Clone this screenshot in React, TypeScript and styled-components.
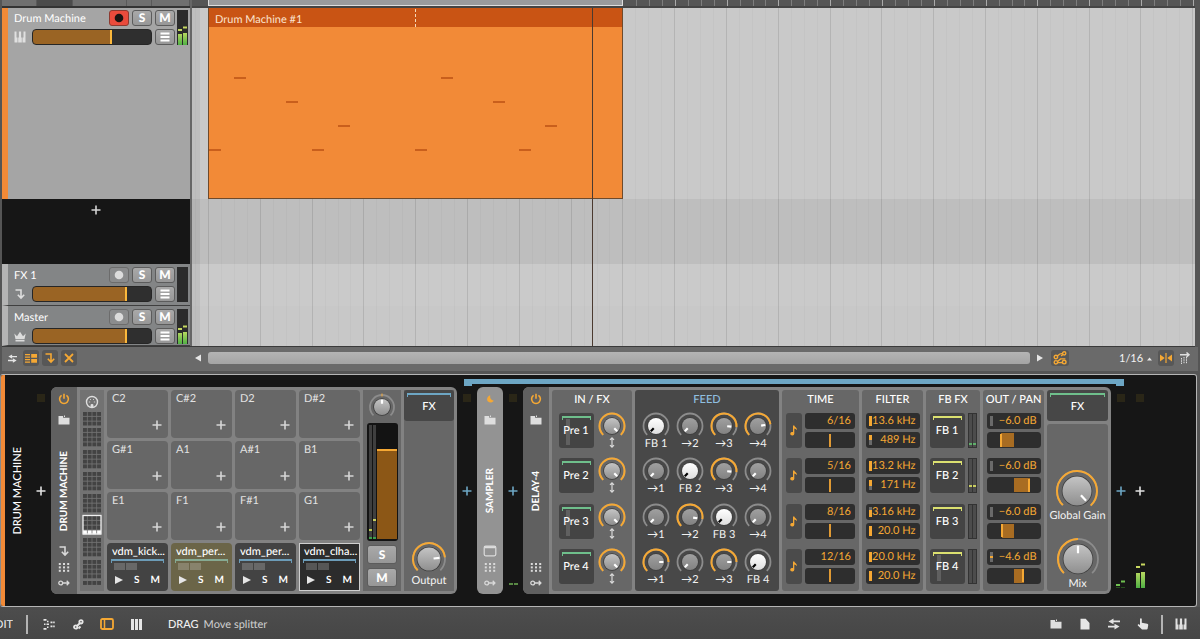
import React from "react";
import styled, { createGlobalStyle, css } from "styled-components";

const C = {
  orange: "#f28a37",
  amber: "#f5a834",
  brown: "#9a6424",
  panel: "#676767",
  frame: "#828282",
  dark: "#161616",
  well: "#2e2e2e",
  blue: "#6da6c4",
  green: "#6fbf8c",
  yellow: "#dbe070",
};

const Global = createGlobalStyle`
  * { box-sizing: border-box; }
  body { margin: 0; background: #555; font-family: Lato, "Open Sans", sans-serif; font-size: 11px; line-height: 14px; color: #f2f2f2; overflow: hidden; text-rendering: geometricPrecision; }
  button, input, select { font: inherit; color: inherit; margin: 0; padding: 0; border: 0; background: none; text-rendering: inherit; }
  svg { display: block; }
`;

/* ---------- shared controls ---------- */

const IconButton = styled.button<{ $active?: boolean; $w?: number }>`
  width: ${(p) => p.$w ?? 16}px;
  height: 16px;
  display: grid;
  place-items: center;
  flex: none;
  border-radius: 3px;
  color: ${(p) => (p.$active ? C.amber : "#e0e0e0")};
  background: ${(p) => (p.$active ? "#575757" : "transparent")};
`;

const KeyButton = styled.button<{ $kind?: "rec" | "dim"; $tall?: boolean }>`
  width: ${(p) => (p.$tall ? 30 : 20)}px;
  height: ${(p) => (p.$tall ? 19 : 16)}px;
  flex: none;
  display: grid;
  place-items: center;
  font-weight: 900;
  font-size: 12px;
  line-height: 12px;
  color: #fff;
  border: 1px solid #5c5c5c;
  border-radius: 3px;
  background: linear-gradient(#a9a9a9, #979797);
  ${(p) => p.$kind === "rec" && css`background: #ea4b3c; border-color: #8c3a30;`}
  ${(p) => p.$kind === "dim" && css`background: #8b8c8d; border-color: #6c6c6c;`}
`;

const Fader = styled.input<{ $pct: number }>`
  appearance: none;
  width: 120px;
  height: 16px;
  border: 1px solid #262626;
  border-radius: 4px;
  background: linear-gradient(to right, ${C.brown} ${(p) => p.$pct}%, #2f2f2f ${(p) => p.$pct}%);
  &::-webkit-slider-thumb { appearance: none; width: 2px; height: 14px; background: #fbb83c; }
`;

const PanSlider = styled.input<{ $from: number; $to: number; $at: number }>`
  appearance: none;
  width: 54px;
  height: 16px;
  border: 1px solid ${C.well};
  border-radius: 3px;
  background: linear-gradient(to right, ${C.well} ${(p) => p.$from}%, #a86c22 ${(p) => p.$from}%, #a86c22 ${(p) => p.$to}%, ${C.well} ${(p) => p.$to}%);
  &::-webkit-slider-thumb { appearance: none; width: 2px; height: 13px; background: ${C.amber}; }
`;

const OffsetSlider = styled.input`
  appearance: none;
  width: 50px;
  height: 16px;
  border-radius: 3px;
  background: ${C.well};
  &::-webkit-slider-thumb { appearance: none; width: 2px; height: 13px; background: #e09a34; }
`;

const Bracket = styled.span<{ $c: string }>`
  display: block;
  height: 4px;
  border: 1px solid ${(p) => p.$c};
  border-top-width: 2px;
  border-bottom: 0;
`;

const KnobBox = styled.span`
  position: relative;
  display: block;
  flex: none;
  & > svg { overflow: visible; }
`;
const KnobInput = styled.input`
  position: absolute;
  inset: 0;
  width: 100%;
  height: 100%;
  opacity: 0;
`;

function point(c: number, r: number, deg: number) {
  const a = ((deg - 90) * Math.PI) / 180;
  return [c + r * Math.cos(a), c + r * Math.sin(a)];
}
function arc(c: number, r: number, from: number, to: number) {
  const [x1, y1] = point(c, r, from);
  const [x2, y2] = point(c, r, to);
  return `M${x1} ${y1}A${r} ${r} 0 ${to - from > 180 ? 1 : 0} 1 ${x2} ${y2}`;
}

type KnobProps = { name: string; size: number; h: number; ring: number; disc: number; angle: number; lit?: boolean; tone?: "white" | "grey" | "light"; zero?: boolean };
function Knob({ name, size, h, ring, disc, angle, lit, tone = "light", zero }: KnobProps) {
  const c = size / 2;
  const [x1, y1] = point(c, disc * 0.4, angle);
  const [x2, y2] = point(c, disc * 0.92, angle);
  const id = `k-${tone}`;
  return (
    <KnobBox>
      <svg width={size} height={h} viewBox={`0 0 ${size} ${h}`}>
        <defs>
          <linearGradient id={id} x1="0" y1="0" x2="0" y2="1">
            <stop offset="0" stopColor={tone === "white" ? "#ffffff" : tone === "grey" ? "#a0a0a0" : "#c4c4c4"} />
            <stop offset="1" stopColor={tone === "white" ? "#dedede" : tone === "grey" ? "#828282" : "#8f8f8f"} />
          </linearGradient>
        </defs>
        <path d={arc(c, ring, -135, 135)} fill="none" stroke="#8c8c8c" strokeWidth="1.8" />
        {lit && <path d={arc(c, ring, -135, angle)} fill="none" stroke={C.amber} strokeWidth="2" />}
        {zero && <path d={`M${c} ${c - ring - 1.5}v3`} stroke={C.amber} strokeWidth="1" />}
        <circle cx={c} cy={c} r={disc + 0.8} fill="#3c3c3c" />
        <circle cx={c} cy={c} r={disc} fill={`url(#${id})`} />
        <path d={`M${x1} ${y1}L${x2} ${y2}`} stroke={tone === "white" ? "#000" : "#fff"} strokeWidth="2.2" />
      </svg>
      <KnobInput type="range" min={-135} max={135} defaultValue={angle} aria-label={name} />
    </KnobBox>
  );
}

/* ---------- icons ---------- */

const Power = () => (
  <svg width="12" height="12" viewBox="0 0 12 12" fill="none" stroke={C.amber} strokeWidth="1.6">
    <path d="M3.6 2.4a4.4 4.4 0 1 0 4.8 0M6 .8v5" />
  </svg>
);
const Moon = () => (
  <svg width="12" height="12" viewBox="0 0 12 12">
    <path d="M6.2 2.2c-.5 2.8.6 4.6 3.6 5.6-1.4 2-4 2.4-5.8.8C2.4 7 3 3.2 6.2 2.2z" fill={C.amber} />
  </svg>
);
const Folder = () => (
  <svg width="12" height="10" viewBox="0 0 12 10" fill="#dedede">
    <path d="M.5 9.500V1h4.600v1.800h6.400v6.700zM6 .6h1v1.400H6z" />
  </svg>
);
const Plus = ({ color = "#e2e2e2" }: { color?: string }) => (
  <svg width="10" height="10" viewBox="0 0 10 10">
    <path d="M5 .5v9M.5 5h9" stroke={color} strokeWidth="1.6" />
  </svg>
);
const Turn = ({ color = "#d8d8d8" }: { color?: string }) => (
  <svg width="12" height="12" viewBox="0 0 12 12" fill="none" stroke={color} strokeWidth="1.6">
    <path d="M1.500 2h5.500v8M3.800 6.800L7 10l3.200-3.200" />
  </svg>
);
const Dots = () => (
  <svg width="12" height="9" viewBox="0 0 12 9" fill="#dadada">
    {[0, 3.4, 6.8].map((y) => [0.8, 5, 9.2].map((x) => <rect key={x + y * 20} x={x} y={y} width="2" height="2" />))}
  </svg>
);
const Link = () => (
  <svg width="12" height="8" viewBox="0 0 12 8" fill="none" stroke="#d8d8d8" strokeWidth="1.300">
    <circle cx="2.700" cy="4" r="1.900" />
    <path d="M4.600 4h6.200M8.700 1.800L10.900 4 8.700 6.200" />
  </svg>
);
const WindowIcon = () => (
  <svg width="14" height="12" viewBox="0 0 14 12">
    <rect x="1.200" y="1.200" width="11.600" height="9.600" rx="1.500" fill="none" stroke="#dcdcdc" strokeWidth="1.200" />
    <path d="M1.500 2.300h11" stroke="#dcdcdc" strokeWidth="2" />
  </svg>
);
const Piano = () => (
  <svg width="12" height="12" viewBox="0 0 12 12" fill="#e0e0e0">
    <path d="M.5.500h2v6h1v5h-3zM4.200 6.500h.7v-6h2.200v6h.7v5H4.200zM8.500 6.500h1v-6h2v11h-3z" />
  </svg>
);
const Crown = () => (
  <svg width="12" height="11" viewBox="0 0 12 11" fill="#dcdcdc">
    <path d="M.3 2.500l2.700 2.700L6 .8l3 4.400 2.700-2.700-1.200 5.800h-9zM1.500 9h9v1.500h-9z" />
  </svg>
);
const Lines = () => (
  <svg width="10" height="10" viewBox="0 0 10 10" stroke="#fff" strokeWidth="1.800">
    <path d="M.5 1.500h9M.5 5h9M.5 8.500h9" />
  </svg>
);
const Dot = ({ color }: { color: string }) => (
  <svg width="10" height="10" viewBox="0 0 10 10">
    <circle cx="5" cy="5" r="4.300" fill={color} />
  </svg>
);
const Swap = ({ s = 10 }: { s?: number }) => (
  <svg width={s} height={s} viewBox="0 0 12 12" fill="#e4e4e4">
    <path d="M5.500 2.500H12v1.800H5.500v2L.500 3.400l5-2.900zM6.500 7.700H0v1.800h6.500v2l5-2.900-5-2.900z" />
  </svg>
);
const Note = () => (
  <svg width="8" height="11" viewBox="0 0 8 11" fill={C.amber}>
    <path d="M3 .5h1.300c.2 1.500 3 2 2.600 4.700C6.200 4 5.200 3.600 4.300 3.500V8.600a2 1.700 0 1 1-1.300-1.500z" />
  </svg>
);
const UpDown = () => (
  <svg width="8" height="12" viewBox="0 0 8 12" fill="none" stroke="#dadada" strokeWidth="1.300">
    <path d="M4 1v10M1.800 3.200L4 1l2.200 2.200M1.800 8.800L4 11l2.200-2.200" />
  </svg>
);
const Triangle = ({ d }: { d: string }) => (
  <svg width="8" height="8" viewBox="0 0 8 8" fill="#e6e6e6">
    <path d={d} />
  </svg>
);

/* ---------- arranger ---------- */

const Page = styled.div`
  min-height: 100vh;
  display: flex;
  flex-direction: column;
  background: #555;
`;
const Arranger = styled.section`
  flex: 1;
  display: grid;
  grid-template-columns: 188px 1fr;
  column-gap: 2px;
  grid-template-rows: 6px 1fr 65px 42px 40px;
  margin: 0 5px 0 2px;
  background: #666;
  border-bottom: 1px solid #3a3a3a;
`;
const Overview = styled.div`
  display: grid;
  grid-template-columns: 35px 36px 54px 25px 1fr;
  background: #6d6d6d;
`;
const OverviewCell = styled.span<{ $on?: boolean }>`
  background: ${(p) => (p.$on ? "#4b4b4b" : "#6f6f6f")};
  border-right: 1px solid #595959;
`;
const Ruler = styled.div`
  display: flex;
  background: #555;
  padding-left: 16px;
`;
const LoopRegion = styled.div`
  width: 415px;
  flex: none;
  background: #9a9b9d;
  border: solid #dedede;
  border-width: 0 1px 1px;
`;
const RulerTicks = styled.div`
  flex: 1;
  overflow: hidden;
`;
const TrackColumn = styled.div`
  grid-row: 2 / 6;
  display: grid;
  grid-template-rows: subgrid;
  grid-template-columns: minmax(0, 1fr);
  border-top: 2px solid #333;
`;
const TrackHead = styled.div<{ $main?: boolean }>`
  display: flex;
  align-items: flex-start;
  background: ${(p) => (p.$main ? "#a5a5a5" : "#838586")};
  border-left: 6px solid ${(p) => (p.$main ? C.orange : "#b4b4b4")};
  border-bottom: ${(p) => (p.$main ? 0 : 1)}px solid #3f3f3f;
  padding: ${(p) => (p.$main ? 2 : 3)}px 2px 0 6px;
  gap: 2px;
`;
const TrackGrid = styled.div`
  display: grid;
  grid-template-columns: 18px 71px 20px 20px 20px;
  column-gap: 3px;
  row-gap: 3px;
  align-items: center;
  flex: 1;
`;
const TrackName = styled.span`
  grid-column: 1 / 3;
  padding-top: 2px;
  color: #fff;
`;
const FaderCell = styled.div`
  grid-column: 2 / 5;
  display: flex;
  justify-content: flex-end;
`;
const AddTrack = styled.button`
  background: #161616;
  display: flex;
  justify-content: center;
  padding-top: 6px;
`;
const Timeline = styled.div`
  grid-row: 2 / 6;
  grid-column: 2;
  position: relative;
  display: grid;
  grid-template-rows: subgrid;
  border-top: 2px solid #444;
`;
const Lane = styled.div<{ $tone: string }>`
  background: ${(p) => p.$tone};
  padding-left: 16px;
  display: flex;
`;
const Overlay = styled.svg`
  position: absolute;
  inset: 0;
  width: 100%;
  height: 100%;
`;
const Clip = styled.div`
  position: relative;
  z-index: 1;
  width: 415px;
  background: ${C.orange};
  border: 1px solid #6e4a2c;
  border-top: 0;
  display: flex;
  flex-direction: column;
`;
const ClipTitle = styled.div`
  height: 19px;
  padding: 5px 0 0 6px;
  background: #c95414;
  color: #fbe3cf;
`;
const NoteCanvas = styled.svg`
  flex: 1;
  width: 100%;
`;
const Playhead = styled.div`
  position: absolute;
  z-index: 2;
  left: 400px;
  top: 0;
  bottom: 0;
  width: 1px;
  background: #4b3a30;
`;

const BEAT = 51.8;
const notes = [[0, 3], [1, 0], [3, 1], [4, 3], [5, 2], [8, 3], [9, 0], [11, 1], [12, 3], [13, 2]];

function GridLines() {
  return (
    <Overlay aria-hidden="true">
      {Array.from({ length: 120 }, (_, i) => (
        <rect key={i} x={Math.round(16 + (i - 1) * (BEAT / 4))} y="0" width="1" height="100%" fill="#000" opacity={(i - 1) % 4 === 0 ? 0.1 : 0.025} />
      ))}
      <rect x="0" y="0" width="8" height="100%" fill="#000" opacity="0.05" />
    </Overlay>
  );
}

const MeterBox = styled.div<{ $h: number }>`
  width: 11px;
  height: ${(p) => p.$h}px;
  background: #2b2b2b;
  display: flex;
  align-items: flex-end;
  justify-content: center;
`;
function LevelMeter({ on, h = 35 }: { on?: boolean; h?: number }) {
  return (
    <MeterBox $h={h}>
      {on && (
        <svg width="9" height="20" viewBox="0 0 9 20">
          <defs>
            <linearGradient id="lvl" x1="0" y1="0" x2="0" y2="1">
              <stop offset="0" stopColor="#b8d860" />
              <stop offset="1" stopColor="#4fb044" />
            </linearGradient>
          </defs>
          <path d="M0 9h4v11H0zM5 8h4v12H5z" fill="url(#lvl)" />
          <path d="M0 4h4v2H0zM5 1.500h4v2H5z" fill="#c5d860" />
        </svg>
      )}
    </MeterBox>
  );
}

function Track({ name, main, level, pct, icon }: { name: string; main?: boolean; level?: boolean; pct: number; icon: React.ReactNode }) {
  return (
    <TrackHead $main={main}>
      <TrackGrid>
        <TrackName>{name}</TrackName>
        <KeyButton $kind={main ? "rec" : "dim"} aria-label={`Arm ${name}`}><Dot color={main ? "#1c1412" : "#dcdcdc"} /></KeyButton>
        <KeyButton>S</KeyButton>
        <KeyButton>M</KeyButton>
        {icon}
        <FaderCell><Fader type="range" min={0} max={100} defaultValue={pct} $pct={pct} aria-label={`${name} volume`} /></FaderCell>
        <KeyButton aria-label={`${name} menu`}><Lines /></KeyButton>
      </TrackGrid>
      <LevelMeter on={level} />
    </TrackHead>
  );
}

const ToolStrip = styled.div`
  height: 24px;
  display: flex;
  align-items: center;
  gap: 3px;
  padding: 0 5px 2px 2px;
  background: #6a6a6a;
  margin: 0 2px;
`;
const StripLeft = styled.div`
  width: 187px;
  display: flex;
  gap: 3px;
`;
const Scroll = styled.div`
  flex: 1;
  display: flex;
  align-items: center;
  gap: 6px;
  padding-right: 4px;
`;
const ScrollThumb = styled.div`
  flex: 1;
  height: 12px;
  border-radius: 3px;
  background: linear-gradient(#b4b4b4, #a4a4a4);
`;
const StripRight = styled.div`
  width: 142px;
  display: flex;
  align-items: center;
  gap: 3px;
`;
const Snap = styled.label`
  flex: 1;
  display: flex;
  align-items: center;
  justify-content: flex-end;
  gap: 3px;
  padding: 2px 3px 0 0;
`;
const SnapSelect = styled.select`
  appearance: none;
`;

/* ---------- device panel ---------- */

const DevicePanel = styled.section`
  height: 233px;
  margin: 3px 3px 0 0;
  display: flex;
  background: ${C.dark};
  border: 1px solid #b5b5b5;
  border-left-color: #8a8a8a;
  border-radius: 3px;
  overflow: hidden;
`;
const Stripe = styled.span`
  width: 4px;
  background: ${C.orange};
`;
const VLabel = styled.span<{ $big?: boolean }>`
  writing-mode: vertical-rl;
  transform: rotate(180deg);
  font-size: ${(p) => (p.$big ? 11 : 10)}px;
  font-weight: ${(p) => (p.$big ? 500 : 700)};
  white-space: nowrap;
  color: #fff;
`;
const ChainName = styled.div`
  width: 26px;
  display: grid;
  place-items: center;
`;
const SlotBox = styled.div<{ $w: number }>`
  width: ${(p) => p.$w}px;
  flex: none;
  height: 207px;
  display: grid;
  grid-template-rows: 1fr 14px 1fr;
  justify-items: center;
  align-items: center;
  padding: 6px 0;
`;
const SlotLed = styled.span`
  width: 8px;
  height: 8px;
  margin-top: 1px;
  background: #2a2617;
  align-self: start;
`;
const SlotFoot = styled.span`
  align-self: end;
`;
const SlotButton = styled.button`
  display: grid;
  place-items: center;
`;
function Slot({ w, color, foot }: { w: number; color?: string; foot?: React.ReactNode }) {
  return (
    <SlotBox $w={w}>
      <SlotLed />
      <SlotButton aria-label="Add device"><Plus color={color} /></SlotButton>
      <SlotFoot>{foot}</SlotFoot>
    </SlotBox>
  );
}
const Lead = styled.div`
  display: flex;
  padding-top: 12px;
`;
const Nested = styled.div`
  padding-top: 4px;
`;
const ChainBar = styled.div`
  height: 7px;
  margin: 0 6px 1px 7px;
  border: 8px solid ${C.blue};
  border-width: 0 8px;
  background: linear-gradient(${C.blue} 5px, ${C.dark} 5px);
`;
const Row = styled.div`
  display: flex;
`;
const DeviceBox = styled.article<{ $tone?: string }>`
  height: 207px;
  display: flex;
  gap: 3px;
  padding-right: ${(p) => (p.$tone ? 0 : 3)}px;
  background: ${(p) => p.$tone ?? C.frame};
  border-radius: 6px;
  overflow: hidden;
`;
const DeviceSide = styled.header<{ $clear?: boolean }>`
  width: 26px;
  display: grid;
  grid-template-rows: 1fr auto 1fr;
  justify-items: center;
  padding: 4px 0 3px;
  background: ${(p) => (p.$clear ? "transparent" : "#606060")};
`;
const SideGroup = styled.div<{ $end?: boolean }>`
  display: flex;
  flex-direction: column;
  align-items: center;
  justify-content: ${(p) => (p.$end ? "flex-end" : "flex-start")};
  gap: ${(p) => (p.$end ? 0 : 5)}px;
`;
function Side({ name, top, extra, clear }: { name: string; top: React.ReactNode; extra?: React.ReactNode; clear?: boolean }) {
  return (
    <DeviceSide $clear={clear}>
      <SideGroup>
        <IconButton aria-label="Enable">{top}</IconButton>
        <IconButton aria-label="Presets"><Folder /></IconButton>
      </SideGroup>
      <VLabel>{name}</VLabel>
      <SideGroup $end>
        {extra && <IconButton aria-label="Chain">{extra}</IconButton>}
        <IconButton aria-label="Remote controls"><Dots /></IconButton>
        <IconButton aria-label="Modulators"><Link /></IconButton>
      </SideGroup>
    </DeviceSide>
  );
}

const Minimap = styled.div`
  width: 24px;
  margin: 3px 0;
  background: #727272;
  display: flex;
  justify-content: center;
`;
const PadGrid = styled.div`
  display: grid;
  grid-template-columns: repeat(4, 61px);
  grid-auto-rows: 48px;
  gap: 3px;
  margin: 3px 0;
`;
const Pad = styled.button`
  display: flex;
  justify-content: space-between;
  padding: 2px 6px 8px 5px;
  background: ${C.panel};
  border-radius: 4px;
  color: #e2e2e2;
  text-align: left;
  & > svg { align-self: flex-end; }
`;
const FullPad = styled.div<{ $mode?: string }>`
  display: flex;
  flex-direction: column;
  background: ${(p) => (p.$mode === "hit" ? "#6b6548" : p.$mode === "sel" ? "#2c2c2c" : "#434343")};
  outline: ${(p) => (p.$mode === "sel" ? "1px solid #cfcfcf" : "none")};
  outline-offset: -1px;
  border-radius: ${(p) => (p.$mode === "sel" ? 0 : 4)}px;
  padding: 2px 4px;
`;
const PadName = styled.span`
  padding-left: 1px;
  white-space: nowrap;
  color: #fff;
  font-weight: 500;
`;
const Chips = styled.span`
  display: flex;
  gap: 1px;
  padding-left: 3px;
`;
const Chip = styled.span`
  width: 11px;
  height: 7px;
  background: rgba(255, 255, 255, 0.2);
`;
const PadKeys = styled.span`
  display: flex;
  justify-content: space-between;
  align-items: center;
  padding: 5px 4px 0;
  font-size: 10px;
`;
const PadKey = styled.button`
  color: #fff;
  font-weight: 700;
  line-height: 10px;
`;

const Strip = styled.div<{ $w: number; $bare?: boolean }>`
  width: ${(p) => p.$w}px;
  margin: 3px 0;
  display: flex;
  flex-direction: column;
  align-items: center;
  justify-content: space-between;
  background: ${(p) => (p.$bare ? "transparent" : C.panel)};
`;
const Mixer = styled(Strip)`
  padding: 3px 0 4px;
  gap: 4px;
`;
const VolumeWell = styled.div`
  display: grid;
  grid-template-columns: 3px 3px 20px;
  grid-template-rows: minmax(0, 1fr);
  gap: 1px;
  flex: 1;
  min-height: 0;
  width: 31px;
  background: #131313;
  border: 2px solid #131313;
  border-right-width: 1px;
  border-radius: 3px;
`;
const ThinMeter = styled.span<{ $y: string; $at: number }>`
  background:
    linear-gradient(${(p) => p.$y}, ${(p) => p.$y}) 0 ${(p) => p.$at}% / 100% 2px no-repeat,
    linear-gradient(#3ea04c, #3ea04c) 0 100% / 100% 2px no-repeat,
    #3f3f3f;
`;
const VFader = styled.input`
  appearance: none;
  writing-mode: vertical-lr;
  direction: rtl;
  width: 20px;
  height: 100%;
  min-height: 0;
  background: linear-gradient(to top, #8c5716 79%, #131313 79%);
  &::-webkit-slider-thumb { appearance: none; width: 20px; height: 2px; background: ${C.amber}; }
`;
const FxButton = styled.button<{ $w: number }>`
  width: ${(p) => p.$w}px;
  height: 31px;
  padding: 3px;
  background: #474747;
  border-radius: 3px;
  display: flex;
  flex-direction: column;
  align-items: center;
  gap: 3px;
  color: #fff;
  font-weight: 500;
  & > span { width: 100%; }
`;
const KnobLabel = styled.label`
  display: flex;
  flex-direction: column;
  align-items: center;
  gap: 2px;
  white-space: nowrap;
  color: #f4f4f4;
`;
const OutputArea = styled.div`
  padding-bottom: 3px;
`;
const KnobArea = styled.div`
  flex: 1;
  align-self: stretch;
  margin-top: 3px;
  display: flex;
  flex-direction: column;
  align-items: center;
  justify-content: flex-end;
  gap: 14px;
  background: ${C.panel};
  border-radius: 3px;
`;

const Module = styled.section<{ $w: number; $dark?: boolean }>`
  width: ${(p) => p.$w}px;
  height: 201px;
  margin: 3px 0;
  flex: none;
  border-radius: 3px;
  background: ${(p) => (p.$dark ? "#484848" : C.panel)};
  display: flex;
  flex-direction: column;
  padding-bottom: 7px;
`;
const ModuleTitle = styled.h2<{ $blue?: boolean }>`
  margin: 0;
  height: 23px;
  line-height: 20px;
  font-size: 11px;
  font-weight: 500;
  text-align: center;
  white-space: nowrap;
  color: ${(p) => (p.$blue ? "#8fbfe0" : "#fff")};
`;
const ModuleRows = styled.div`
  flex: 1;
  display: flex;
  flex-direction: column;
  justify-content: space-between;
`;
const ModuleRow = styled.div<{ $gap: number }>`
  height: 35px;
  display: flex;
  justify-content: center;
  gap: ${(p) => p.$gap}px;
`;
const FxSlot = styled.button<{ $meter?: boolean }>`
  width: 35px;
  height: 35px;
  padding: 3px;
  display: flex;
  flex-direction: column;
  align-items: center;
  gap: 4px;
  border-radius: 3px;
  color: #fff;
  font-weight: 500;
  white-space: nowrap;
  background: ${(p) => (p.$meter ? "linear-gradient(#606060, #606060) 7px 6px / 4px 26px no-repeat, #444" : "#444")};
  & > span { width: 100%; }
`;
const KnobStack = styled.div`
  width: 28px;
  display: flex;
  flex-direction: column;
  align-items: center;
`;
const FeedCell = styled.label`
  width: 34px;
  display: flex;
  flex-direction: column;
  align-items: center;
  white-space: nowrap;
`;
const NoteButton = styled.button`
  width: 16px;
  height: 35px;
  border-radius: 3px;
  background: #4b4b4b;
  display: grid;
  place-items: center;
`;
const Pair = styled.div`
  display: flex;
  flex-direction: column;
  gap: 3px;
`;
const ValueBox = styled.div<{ $w: number }>`
  width: ${(p) => p.$w}px;
  height: 16px;
  display: flex;
  align-items: center;
  padding: 0 4px 0 3px;
  border-radius: 3px;
  background: ${C.well};
`;
const ValueInput = styled.input`
  flex: 1;
  min-width: 0;
  width: 20px;
  text-align: right;
  color: ${C.amber};
  line-height: 16px;
`;
const Gauge = styled.span<{ $from: number; $to: number }>`
  width: 3px;
  height: 10px;
  flex: none;
  background: linear-gradient(#6a6a6a ${(p) => p.$from}%, ${C.amber} ${(p) => p.$from}%, ${C.amber} ${(p) => p.$to}%, #6a6a6a ${(p) => p.$to}%);
`;
const TwinMeter = styled.div<{ $c?: string; $at?: number }>`
  width: 9px;
  height: 35px;
  display: grid;
  grid-template-columns: 1fr 1fr;
  gap: 1px;
  border: 1px solid #333;
  background: #333;
  & > i {
    background: linear-gradient(${(p) => p.$c ?? "#4c4c4c"}, ${(p) => p.$c ?? "#4c4c4c"}) 0 ${(p) => p.$at ?? 0}% / 100% 2px no-repeat, #4c4c4c;
  }
`;

const emptyPads = ["C2", "C#2", "D2", "D#2", "G#1", "A1", "A#1", "B1", "E1", "F1", "F#1", "G1"];
const fullPads = [
  { name: "vdm_kick...", mode: "", c: "#6c9cb8" },
  { name: "vdm_per...", mode: "hit", c: "#86aa92" },
  { name: "vdm_per...", mode: "", c: "#6c9cb8" },
  { name: "vdm_clha...", mode: "sel", c: "#6c9cb8" },
];

function PadMap() {
  const blocks = [
    [27, 3], [43, 4], [65, 4], [87, 4], [109, 4], [131, 4], [153, 4], [175, 4], [196, 1],
  ];
  return (
    <svg width="20" height="201" viewBox="0 0 20 201" fill="#434343">
      <circle cx="10" cy="12" r="5.500" fill="none" stroke="#dedede" strokeWidth="1.400" />
      <path d="M6.800 12h1.400M11.800 12h1.400M8 9.500h1M11 9.500h1M9 14.500h2v2.500H9z" fill="#dedede" stroke="#dedede" strokeWidth=".8" />
      {blocks.map(([top, rows], b) =>
        Array.from({ length: rows * 4 }, (_, i) => (
          <rect key={`${b}-${i}`} x={1 + (i % 4) * 4.7} y={top - 5 + Math.floor(i / 4) * 4.8} width="3.900" height="3.900" fill={b === 5 && i > 11 ? "#fff" : undefined} />
        ))
      )}
      <rect x="1" y="125.500" width="18" height="18.500" fill="none" stroke="#f0f0f0" strokeWidth="1.300" />
    </svg>
  );
}

/* feedback matrix: angle of each knob, null = inactive */
const feed: (number | null)[][] = [
  [null, null, 95, 82],
  [null, null, 95, null],
  [null, 100, null, null],
  [90, null, 90, null],
];
const times = ["6/16", "5/16", "8/16", "12/16"];
const filters: [string, number, number, string, number, number][] = [
  ["13.6 kHz", 0, 100, "489 Hz", 0, 45],
  ["13.2 kHz", 0, 100, "171 Hz", 0, 65],
  ["3.16 kHz", 30, 100, "20.0 Hz", 0, 100],
  ["20.0 kHz", 0, 100, "20.0 Hz", 0, 100],
];
const outs: [string, number, number, number][] = [
  ["−6.0 dB", 25, 50, 24],
  ["−6.0 dB", 50, 80, 81],
  ["−6.0 dB", 26, 50, 26],
  ["−4.6 dB", 50, 70, 69],
];

function DrumMachine() {
  return (
    <DeviceBox>
      <Side name="DRUM MACHINE" top={<Power />} extra={<Turn />} />
      <Minimap><PadMap /></Minimap>
      <PadGrid>
        {emptyPads.map((n) => (
          <Pad key={n}><span>{n}</span><Plus color="#d6d6d6" /></Pad>
        ))}
        {fullPads.map((p, i) => (
          <FullPad key={i} $mode={p.mode}>
            <PadName>{p.name}</PadName>
            <Bracket $c={p.c} />
            <Chips><Chip /><Chip /></Chips>
            <PadKeys>
              <PadKey aria-label="Play"><Triangle d="M0 0l8 4-8 4z" /></PadKey>
              <PadKey>S</PadKey>
              <PadKey>M</PadKey>
            </PadKeys>
          </FullPad>
        ))}
      </PadGrid>
      <Mixer $w={38}>
        <Knob name="Pan" size={28} h={26} ring={12} disc={8} angle={0} zero />
        <VolumeWell>
          <ThinMeter $y="#b8c850" $at={93} />
          <ThinMeter $y="#c8d060" $at={84} />
          <VFader type="range" defaultValue={79} aria-label="Pad volume" />
        </VolumeWell>
        <KeyButton $tall>S</KeyButton>
        <KeyButton $tall>M</KeyButton>
      </Mixer>
      <Strip $w={50}>
        <FxButton $w={50}><Bracket $c={C.blue} />FX</FxButton>
        <OutputArea>
          <KnobLabel><Knob name="Output" size={36} h={31} ring={16} disc={11.5} angle={84} lit />Output</KnobLabel>
        </OutputArea>
      </Strip>
    </DeviceBox>
  );
}

function Delay() {
  return (
    <DeviceBox>
      <Side name="DELAY-4" top={<Power />} />
      <Module $w={80}>
        <ModuleTitle>IN / FX</ModuleTitle>
        <ModuleRows>
          {[1, 2, 3, 4].map((n) => (
            <ModuleRow key={n} $gap={4}>
              <FxSlot $meter={n % 2 === 1}><Bracket $c={C.green} />Pre {n}</FxSlot>
              <KnobStack><Knob name={`Pre ${n} level`} size={26} h={24} ring={12.5} disc={8} angle={135} lit /><UpDown /></KnobStack>
            </ModuleRow>
          ))}
        </ModuleRows>
      </Module>
      <Module $w={144} $dark>
        <ModuleTitle $blue>FEED</ModuleTitle>
        <ModuleRows>
          {feed.map((row, r) => (
            <ModuleRow key={r} $gap={0}>
              {row.map((a, c) => (
                <FeedCell key={c}>
                  <Knob name={`Feed ${r + 1} to ${c + 1}`} size={26} h={24} ring={12.5} disc={8} angle={a ?? -135} lit={a !== null} tone={r === c ? "white" : "grey"} />
                  {r === c ? `FB ${c + 1}` : `→${c + 1}`}
                </FeedCell>
              ))}
            </ModuleRow>
          ))}
        </ModuleRows>
      </Module>
      <Module $w={77}>
        <ModuleTitle>TIME</ModuleTitle>
        <ModuleRows>
          {times.map((t) => (
            <ModuleRow key={t} $gap={3}>
              <NoteButton aria-label="Sync"><Note /></NoteButton>
              <Pair>
                <ValueBox $w={50}><ValueInput defaultValue={t} aria-label="Time" /></ValueBox>
                <OffsetSlider type="range" aria-label="Offset" />
              </Pair>
            </ModuleRow>
          ))}
        </ModuleRows>
      </Module>
      <Module $w={61}>
        <ModuleTitle>FILTER</ModuleTitle>
        <ModuleRows>
          {filters.map(([hi, a, b, lo, c, d], i) => (
            <ModuleRow key={i} $gap={0}>
              <Pair>
                <ValueBox $w={54}><Gauge $from={a} $to={b} /><ValueInput defaultValue={hi} aria-label="High cut" /></ValueBox>
                <ValueBox $w={54}><Gauge $from={c} $to={d} /><ValueInput defaultValue={lo} aria-label="Low cut" /></ValueBox>
              </Pair>
            </ModuleRow>
          ))}
        </ModuleRows>
      </Module>
      <Module $w={54}>
        <ModuleTitle>FB FX</ModuleTitle>
        <ModuleRows>
          {[1, 2, 3, 4].map((n) => (
            <ModuleRow key={n} $gap={3}>
              <FxSlot $meter={n === 4}><Bracket $c={C.yellow} />FB {n}</FxSlot>
              <TwinMeter $c={n === 1 ? "#5fae6a" : n === 2 ? "#c8cc60" : undefined} $at={n === 1 ? 95 : 82}><i /><i /></TwinMeter>
            </ModuleRow>
          ))}
        </ModuleRows>
      </Module>
      <Module $w={61}>
        <ModuleTitle>OUT / PAN</ModuleTitle>
        <ModuleRows>
          {outs.map(([db, from, to, at], i) => (
            <ModuleRow key={i} $gap={0}>
              <Pair>
                <ValueBox $w={54}><Gauge $from={i === 3 ? 40 : 100} $to={i === 3 ? 55 : 100} /><ValueInput defaultValue={db} aria-label="Output level" /></ValueBox>
                <PanSlider type="range" min={0} max={100} defaultValue={at} $from={from} $to={to} $at={at} aria-label="Pan" />
              </Pair>
            </ModuleRow>
          ))}
        </ModuleRows>
      </Module>
      <Strip $w={61} $bare>
        <FxButton $w={61}><Bracket $c={C.green} />FX</FxButton>
        <KnobArea>
          <KnobLabel><Knob name="Global Gain" size={44} h={38} ring={20} disc={14.5} angle={137} lit />Global Gain</KnobLabel>
          <KnobLabel><Knob name="Mix" size={44} h={38} ring={20} disc={14.5} angle={0} lit />Mix</KnobLabel>
        </KnobArea>
      </Strip>
    </DeviceBox>
  );
}

/* ---------- footer ---------- */

const Footer = styled.footer`
  height: 32px;
  display: flex;
  align-items: center;
  justify-content: space-between;
  padding: 2px 11px 0 0;
  background: linear-gradient(#4d4d4d, #464646);
`;
const FootGroup = styled.div<{ $gap: number }>`
  display: flex;
  align-items: center;
  gap: ${(p) => p.$gap}px;
`;
const Rule = styled.span`
  width: 2px;
  height: 19px;
  background: #b4b4b4;
`;
const Hint = styled.span`
  display: flex;
  gap: 5px;
  padding: 2px 0 0 11px;
  color: #d0d0d0;
`;
const HintKey = styled.strong`
  font-weight: 500;
  color: #f0f0f0;
`;
const ModeButton = styled.button`
  width: 13px;
  padding-top: 2px;
  display: flex;
  justify-content: flex-end;
  overflow: hidden;
  color: #f0f0f0;
`;

export default function App() {
  return (
    <Page>
      <Global />
      <Arranger>
        <Overview>
          <OverviewCell /><OverviewCell $on /><OverviewCell /><OverviewCell /><OverviewCell />
        </Overview>
        <Ruler>
          <LoopRegion />
          <RulerTicks>
            <svg width="100%" height="6">
              {Array.from({ length: 80 }, (_, i) => (
                <rect key={i} x={Math.round((i + 1) * (BEAT / 4))} y="0" width="1" height="6" fill={i % 4 === 3 ? "#aaa" : "#7d7d7d"} />
              ))}
            </svg>
          </RulerTicks>
        </Ruler>
        <TrackColumn>
          <Track name="Drum Machine" main level pct={66} icon={<Piano />} />
          <AddTrack aria-label="Add track"><Plus color="#d4d4d4" /></AddTrack>
          <Track name="FX 1" pct={79} icon={<Turn color="#dedede" />} />
          <Track name="Master" level pct={79} icon={<Crown />} />
        </TrackColumn>
        <Timeline>
          <Lane $tone="#c9c9c9">
            <Clip>
              <ClipTitle>Drum Machine #1</ClipTitle>
              <NoteCanvas>
                {notes.map(([x, y], i) => (
                  <rect key={i} x={Math.max(0, Math.round(x * (BEAT / 2)) - 1)} y={50 + y * 24} width="12" height="2" fill="#c95f1c" />
                ))}
              </NoteCanvas>
              <Overlay aria-hidden="true"><path d="M206.500 1v18" stroke="#f6d9b8" strokeDasharray="3 2" /></Overlay>
            </Clip>
          </Lane>
          <Lane $tone="#bebebe" />
          <Lane $tone="#cacaca" />
          <Lane $tone="#c8c8c8" />
          <GridLines />
          <Playhead />
        </Timeline>
      </Arranger>

      <ToolStrip>
        <StripLeft>
          <IconButton aria-label="Swap"><Swap s={9} /></IconButton>
          <IconButton $active aria-label="Tracks">
            <svg width="12" height="9" viewBox="0 0 12 9" fill={C.amber}><path d="M0 0h5v1.300H0zM0 2.500h5v1.300H0zM0 5h5v1.300H0zM0 7.500h5v1.300H0zM6.200 0H12v3.800H6.200zM6.200 5H12v3.800H6.200z" /></svg>
          </IconButton>
          <IconButton $active aria-label="Effects"><Turn color={C.amber} /></IconButton>
          <IconButton $active aria-label="Close">
            <svg width="10" height="10" viewBox="0 0 10 10"><path d="M1 1l8 8M9 1L1 9" stroke={C.amber} strokeWidth="1.800" /></svg>
          </IconButton>
        </StripLeft>
        <Scroll>
          <Triangle d="M7 .500v7L1 4z" />
          <ScrollThumb />
          <Triangle d="M1 .500v7L7 4z" />
        </Scroll>
        <StripRight>
          <IconButton $active $w={18} aria-label="Automation">
            <svg width="14" height="14" viewBox="0 0 13 13" fill="none" stroke={C.amber} strokeWidth="1.300">
              <circle cx="2.700" cy="5.600" r="1.600" /><circle cx="10.400" cy="2.200" r="1.500" /><circle cx="2.700" cy="10.500" r="1.600" /><circle cx="10.400" cy="10.300" r="1.700" />
              <path d="M4 4.600C5.500 3 7 2.200 8.900 2.200M4.200 9.800L7 7.300h4.500M4.300 10.800h4.400M7.500 4.500L9.300 3.200" />
            </svg>
          </IconButton>
          <Snap>
            <SnapSelect aria-label="Grid" defaultValue="1/16"><option>1/16</option></SnapSelect>
            <svg width="5" height="4" viewBox="0 0 5 4"><path d="M0 3.500L2.500.500 5 3.500z" fill="#e6e6e6" /></svg>
          </Snap>
          <IconButton $active aria-label="Snap">
            <svg width="12" height="10" viewBox="0 0 12 10" fill={C.amber}><path d="M0 1.500L4.700 5 0 8.500zM12 1.500L7.300 5 12 8.500zM5.400 0h1.200v10H5.400z" /></svg>
          </IconButton>
          <IconButton aria-label="Follow">
            <svg width="12" height="12" viewBox="0 0 12 12" fill="none" stroke="#dedede"><path d="M1 2.800h8M7.500.500L10 2.800 7.500 5" strokeWidth="1.500" /><path d="M2.500 6v6M5 5v7M7.500 5v7" strokeDasharray="1.500 .8" /></svg>
          </IconButton>
        </StripRight>
      </ToolStrip>

      <DevicePanel>
        <Stripe />
        <ChainName><VLabel $big>DRUM MACHINE</VLabel></ChainName>
        <Lead>
          <Slot w={20} />
          <DrumMachine />
        </Lead>
        <Nested>
          <ChainBar />
          <Row>
            <Slot w={20} color={C.blue} />
            <DeviceBox $tone="#939393">
              <Side name="SAMPLER" clear top={<Moon />} extra={<WindowIcon />} />
            </DeviceBox>
            <Slot w={20} color={C.blue} foot={<svg width="9" height="5" viewBox="0 0 9 5"><path d="M0 1h4M5 1h4" stroke="#6fae54" strokeWidth="1.500" /></svg>} />
            <Delay />
            <Slot w={19} color={C.blue} foot={<svg width="9" height="8" viewBox="0 0 9 8"><path d="M0 5h4M5 1.500h4" stroke="#6fbf50" strokeWidth="1.800" /><path d="M0 7.500h4M5 7.500h4" stroke="#28501f" /></svg>} />
          </Row>
        </Nested>
        <Lead>
          <Slot w={20} foot={
            <svg width="9" height="25" viewBox="0 0 9 25">
              <path d="M0 10h4v15H0zM5 9h4v16H5z" fill="url(#lvl)" />
              <path d="M0 4h4M5 1.500h4" stroke="#c8d860" strokeWidth="1.800" />
            </svg>
          } />
        </Lead>
      </DevicePanel>

      <Footer>
        <FootGroup $gap={13}>
          <ModeButton>DIT</ModeButton>
          <Rule />
          <IconButton aria-label="Arrange">
            <svg width="12" height="12" viewBox="0 0 12 12" fill="#e6e6e6"><path d="M.5 1h3v1.800h-3zM4 2.800h1.500v1.500H4zM7.500 3.500h2v1.800h-2zM10.200 3.500h1.500v1.800h-1.500zM1 5.500h1.500V7H1zM3.500 5.500H6V7H3.500zM7.500 7.500h2v1.800h-2zM10.200 7.500h1.500v1.800h-1.500zM.5 10h3v1.800h-3zM4 8.500h1.500V10H4z" /></svg>
          </IconButton>
          <IconButton aria-label="Automation">
            <svg width="11" height="11" viewBox="0 0 11 11" fill="none" stroke="#e6e6e6" strokeWidth="1.800"><circle cx="2.700" cy="8" r="1.700" /><circle cx="8" cy="2.800" r="1.700" /><path d="M4 7l3-3M7.500 7.500l-2 2" /></svg>
          </IconButton>
          <IconButton aria-label="Devices">
            <svg width="14" height="12" viewBox="0 0 14 12"><rect x="1" y="1" width="12" height="10" rx="1.500" fill="none" stroke={C.amber} strokeWidth="1.800" /><path d="M4.500 1v10" stroke={C.amber} strokeWidth="1.500" /></svg>
          </IconButton>
          <IconButton aria-label="Mixer">
            <svg width="11" height="11" viewBox="0 0 11 11" fill="#e6e6e6"><path d="M0 0h3v11H0zM4 0h3v11H4zM8 0h3v11H8z" /></svg>
          </IconButton>
          <Hint><HintKey>DRAG</HintKey>Move splitter</Hint>
        </FootGroup>
        <FootGroup $gap={10}>
          <FootGroup $gap={13}>
            <IconButton aria-label="Browser"><Folder /></IconButton>
            <IconButton aria-label="Project">
              <svg width="10" height="12" viewBox="0 0 10 12" fill="#e6e6e6"><path d="M.5.8h5.200L9.500 5v6.500h-9z" /></svg>
            </IconButton>
            <IconButton aria-label="Input and output"><Swap s={12} /></IconButton>
            <IconButton aria-label="Controllers">
              <svg width="12" height="12" viewBox="0 0 12 12" fill="#e6e6e6"><path d="M3 1.200a.9.9 0 0 1 1.800 0v3.600l5.400.9c.8.200 1.100.7 1 1.500l-.6 3.600a1 1 0 0 1-1 .8H5L.8 7.400c-.3-.9.7-1.500 1.400-.9l.8.600z" /></svg>
            </IconButton>
          </FootGroup>
          <Rule />
          <IconButton aria-label="Keyboard"><Piano /></IconButton>
        </FootGroup>
      </Footer>
    </Page>
  );
}
